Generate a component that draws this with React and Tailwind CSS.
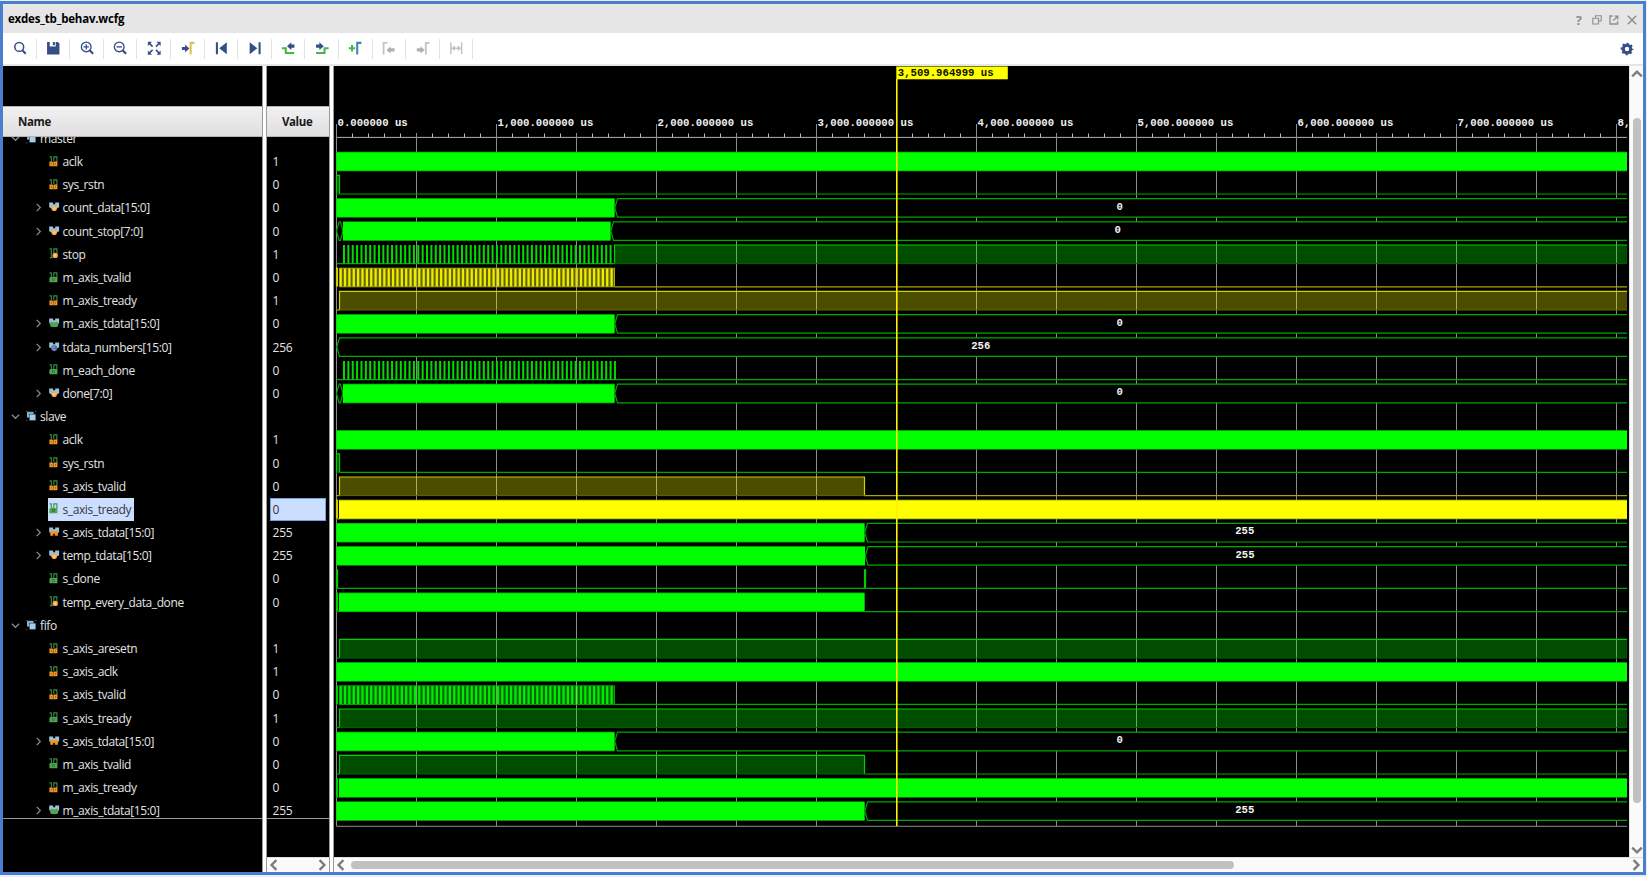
const GREEN = { solid: '#00ff00', line: '#00a800', edge: '#00d000', fill: '#004d00', dim: '#006400' }
const YELLOW = { solid: '#ffff00', line: '#a8a800', edge: '#d0d000', fill: '#4d4d00', dim: '#646400' }

const X0 = 336.5
const X1 = 1627
const M_END = 614.5
const S_END = 864.5

const solid = (a, b) => ({ type: 'solid', a, b })
const low = (a, b) => ({ type: 'low', a, b })
const high = (a, b) => ({ type: 'high', a, b })
const bus = (a, b, label, closed) => ({ type: 'bus', a, b, label, closed })
const pulses = (a, b) => ({ type: 'pulses', a, b })
const dense = (a, b) => ({ type: 'dense', a, b })

const ROWS = [
  { name: 'master', group: true },
  { name: 'aclk', icon: 'in', value: '1', wave: [solid(X0, X1)] },
  { name: 'sys_rstn', icon: 'in', value: '0', wave: [high(X0, 339.5), low(339.5, X1)] },
  { name: 'count_data[15:0]', icon: 'bus-reg', value: '0', wave: [solid(X0, M_END), bus(M_END, X1, '0')] },
  { name: 'count_stop[7:0]', icon: 'bus-reg', value: '0', wave: [bus(X0, 343, '', true), solid(343, 610.5), bus(610.5, X1, '0')] },
  { name: 'stop', icon: 'reg', value: '1', wave: [low(X0, M_END), pulses(343, 613), high(M_END, X1)] },
  { name: 'm_axis_tvalid', icon: 'out', value: '0', color: YELLOW, wave: [high(X0, 337.5), dense(339.5, M_END), low(M_END, X1)] },
  { name: 'm_axis_tready', icon: 'in', value: '1', color: YELLOW, wave: [low(X0, 339.5), high(339.5, X1)] },
  { name: 'm_axis_tdata[15:0]', icon: 'bus-out', value: '0', wave: [solid(X0, M_END), bus(M_END, X1, '0')] },
  { name: 'tdata_numbers[15:0]', icon: 'bus-const', value: '256', wave: [bus(X0, X1, '256')] },
  { name: 'm_each_done', icon: 'out', value: '0', wave: [low(X0, X1), pulses(343, 618)] },
  { name: 'done[7:0]', icon: 'bus-reg', value: '0', wave: [bus(X0, 343, '', true), solid(343, M_END), bus(M_END, X1, '0')] },
  { name: 'slave', group: true },
  { name: 'aclk', icon: 'in', value: '1', wave: [solid(X0, X1)] },
  { name: 'sys_rstn', icon: 'in', value: '0', wave: [high(X0, 339.5), low(339.5, X1)] },
  { name: 's_axis_tvalid', icon: 'in', value: '0', color: YELLOW, wave: [low(X0, 339.5), high(339.5, S_END), low(S_END, X1)] },
  { name: 's_axis_tready', icon: 'out', value: '0', color: YELLOW, selected: true, wave: [high(X0, 337.5), low(337.5, 339), solid(339, X1)] },
  { name: 's_axis_tdata[15:0]', icon: 'bus-in', value: '255', wave: [solid(X0, S_END), bus(S_END, X1, '255')] },
  { name: 'temp_tdata[15:0]', icon: 'bus-reg', value: '255', wave: [solid(X0, 865), bus(865, X1, '255')] },
  { name: 's_done', icon: 'out', value: '0', wave: [high(X0, 337.5), low(337.5, X1), high(864.5, 865.5)] },
  { name: 'temp_every_data_done', icon: 'reg', value: '0', wave: [high(X0, 337.5), low(337.5, 339), solid(339, S_END), low(S_END, X1)] },
  { name: 'fifo', group: true },
  { name: 's_axis_aresetn', icon: 'in', value: '1', wave: [low(X0, 339.5), high(339.5, X1)] },
  { name: 's_axis_aclk', icon: 'in', value: '1', wave: [solid(X0, X1)] },
  { name: 's_axis_tvalid', icon: 'in', value: '0', wave: [high(X0, 337.5), dense(339.5, M_END), low(M_END, X1)] },
  { name: 's_axis_tready', icon: 'out', value: '1', wave: [low(X0, 339.5), high(339.5, X1)] },
  { name: 's_axis_tdata[15:0]', icon: 'bus-in', value: '0', wave: [solid(X0, M_END), bus(M_END, X1, '0')] },
  { name: 'm_axis_tvalid', icon: 'out', value: '0', wave: [low(X0, 339.5), high(339.5, S_END), low(S_END, X1)] },
  { name: 'm_axis_tready', icon: 'in', value: '0', wave: [high(X0, 337.5), low(337.5, 339), solid(339, X1)] },
  { name: 'm_axis_tdata[15:0]', icon: 'bus-out', value: '255', wave: [solid(X0, S_END), bus(S_END, X1, '255')] },
]

const NAVY = '#344f87'

function Chevron({ dir = 'right', size = 9, color = '#8a8a8a', width = 1.4 }) {
  const d = {
    right: 'M3 1 L7 5 L3 9',
    left: 'M7 1 L3 5 L7 9',
    down: 'M1 3 L5 7 L9 3',
    up: 'M1 7 L5 3 L9 7',
  }[dir]
  return (
    <svg width={size} height={size} viewBox="0 0 10 10" className="block shrink-0" fill="none" stroke={color} strokeWidth={width}>
      <path d={d} />
    </svg>
  )
}

// lower half of a scalar signal icon
function Marker({ kind }) {
  if (kind === 'in') {
    return (
      <>
        <path d="M0.4 5.4 h3 l1 1 l1 -1 h3 v4.8 h-8 z" fill="#ef9526" />
        <path d="M4.4 6.2 v4 M2.3 7 v1.8 M6.5 7 v1.8" stroke="#8d5212" strokeWidth="0.7" />
      </>
    )
  }
  return (
    <>
      <path d="M0.4 5.8 l1 -0.8 h6 l1 0.8 v4.4 h-8 z" fill="#4fa551" />
      <rect x="3.3" y="6.6" width="2.2" height="2" fill="none" stroke="#2b7032" strokeWidth="0.7" />
    </>
  )
}

function SignalIcon({ icon }) {
  if (icon.startsWith('bus-')) {
    const kind = icon.slice(4)
    return (
      <svg width="11" height="11" viewBox="0 0 11 11" className="block">
        <path d="M0.2 0.6 h3.9 v1.6 h2.1 v-1.6 h3.9 v4.6 l-2 1 h-5.9 l-2 -1 z" fill="#9cc3dc" />
        {kind === 'reg' && <circle cx="5.2" cy="6.3" r="2.8" fill="#f9a94b" />}
        {kind === 'reg' && <circle cx="5.2" cy="6.3" r="1.2" fill="#fdd08f" />}
        {kind === 'in' && <path d="M1.3 3.8 h2.6 l1.2 1 l1.2 -1 h2.6 v5 h-3 v-2 h-1.6 v2 h-3 z" fill="#ef9526" />}
        {kind === 'out' && <path d="M1.2 4.6 l1.4 -1 l2.5 1 l2.5 -1 l1.6 1 v3.2 l-1 1.2 h-6 l-1 -1.2 z" fill="#4fa551" />}
        {kind === 'const' && (
          <>
            <circle cx="5.2" cy="6.3" r="3" fill="#4d689e" />
            <path d="M6.3 5.2 A1.5 1.5 0 1 0 6.3 7.4" fill="none" stroke="#b8c9e6" strokeWidth="0.8" />
          </>
        )}
      </svg>
    )
  }
  return (
    <svg width="11" height="12" viewBox="0 0 11 12" className="block">
      <path d="M0.6 0.9 h1.7 v4.6 M4.8 5.5 V0.9 h3.1 v5" fill="none" stroke="#3a9048" strokeWidth="1.1" />
      {icon === 'reg'
        ? <><path d="M2.3 5 v4.6 M0.8 9.6 h3" fill="none" stroke="#3a9048" strokeWidth="1.1" /><circle cx="6.2" cy="7.4" r="2.7" fill="#f9a94b" /><circle cx="6.2" cy="7.4" r="1" fill="#fdd9a4" /></>
        : <Marker kind={icon} />}
    </svg>
  )
}

function GroupIcon() {
  return (
    <svg width="11" height="11" viewBox="0 0 11 11" className="block">
      <path d="M0.3 0.5 h1 M9.3 0.5 h1 M0.3 9.8 h1" stroke="#70767c" strokeWidth="1" />
      <rect x="1" y="0.8" width="6.6" height="5.8" fill="#7fb0d0" />
      <rect x="3.4" y="3.2" width="6.4" height="6.2" fill="#a8cde4" stroke="#223f55" strokeWidth="0.5" />
    </svg>
  )
}

function NameRow({ row }) {
  if (row.group) {
    return (
      <div className="flex h-[23.2px] items-center pl-[8px]">
        <Chevron dir="down" />
        <div className="ml-[6px] w-[14px]"><GroupIcon /></div>
        <span className="mt-[1px]">{row.name}</span>
      </div>
    )
  }
  return (
    <div className="flex h-[23.2px] items-center pl-[31px]">
      <div className="w-[14px]">{row.icon.startsWith('bus-') && <Chevron />}</div>
      <div className={`flex h-full items-center pl-[1px] pr-[3px] ${row.selected ? 'bg-[#ccdeff] text-[#33373d]' : ''}`}>
        <div className="w-[13.5px]"><SignalIcon icon={row.icon} /></div>
        <span className="mt-[1px]">{row.name}</span>
      </div>
    </div>
  )
}

function Segment({ seg, y, color }) {
  const { type, a, b } = seg
  const top = y - 9.2
  const bot = y + 9.4
  if (type === 'solid') {
    return (
      <g>
        <rect x={a} y={top - 0.5} width={b - a} height={bot - top + 1} fill={color.line} />
        <rect x={a} y={top + 0.3} width={b - a} height={bot - top - 0.6} fill={color.solid} />
      </g>
    )
  }
  if (type === 'low') return <path d={`M${a} ${bot} H${b}`} stroke={color.line} strokeWidth="1.2" />
  if (type === 'high') {
    return (
      <g>
        <rect x={a} y={top} width={b - a} height={bot - top} fill={color.solid} fillOpacity="0.3" />
        <path d={`M${a} ${bot} V${top} H${b}${b < X1 ? ` V${bot}` : ''}`} fill="none" stroke={color.edge} strokeWidth="1.2" />
        <path d={`M${a} ${bot} H${b}`} stroke={color.dim} strokeWidth="1" />
      </g>
    )
  }
  if (type === 'bus') {
    const d = seg.closed
      ? `M${a} ${y} L${a + 2.6} ${top} H${b - 2.6} L${b} ${y} L${b - 2.6} ${bot} H${a + 2.6} Z`
      : `M${b} ${top} H${a + 3} L${a + 0.3} ${y} L${a + 3} ${bot} H${b}`
    return (
      <g>
        <path d={d} fill="#000" stroke={color.line} strokeWidth="1.2" />
        {seg.label && <text x={(a + b) / 2 - 1} y={y + 1.8} textAnchor="middle">{seg.label}</text>}
      </g>
    )
  }
  const step = 4.37
  const count = Math.round((b - a) / step)
  const bars = Array.from({ length: count }, (_, i) => a + i * step)
  if (type === 'pulses') {
    return <g>{bars.map(x => <rect key={x} x={x} y={top} width="2" height={bot - top} fill="#00dc00" />)}</g>
  }
  return (
    <g>
      <rect x={a} y={top} width={b - a} height={bot - top} fill={color.dim} />
      {bars.map(x => <rect key={x} x={x} y={top} width="2.3" height={bot - top} fill={color.solid} fillOpacity="0.88" />)}
      <path d={`M${a} ${bot} V${top} H${b} V${bot} H${a}`} fill="none" stroke={color.line} strokeWidth="1" />
      {[416.5, 496.5, 576.5].map(x => <path key={x} d={`M${x} ${top} V${bot}`} stroke="#c8c8a0" strokeOpacity="0.6" />)}
    </g>
  )
}

function WavePanel() {
  const minor = Array.from({ length: 81 }, (_, i) => i)
  const halves = minor.filter(i => i % 5 === 0)
  return (
    <svg width="1295" height="791" viewBox="334 66 1295 791" className="block bg-black"
      fontFamily="'Liberation Mono', monospace" fontSize="10.65" fontWeight="700" fill="#f2f2f2">
      {/* time ruler */}
      <path d={`M${X0} 137.4 H${X1}`} stroke="#b0b0b0" strokeWidth="1" />
      {minor.map(i => <path key={i} d={`M${X0 + i * 16} 133.5 V137`} stroke="#c0c0c0" strokeWidth="1" />)}
      {halves.map(i => (
        <path key={i} d={`M${X0 + i * 16} ${i % 10 === 0 ? 124 : 133} V826`} stroke="#8c8c8c" strokeWidth="1" />
      ))}
      {halves.filter(i => i % 10 === 0).map(i => (
        <text key={i} x={X0 + i * 16 + 1} y="125.6" xmlSpace="preserve">
          {i === 0 ? '0.000000 us' : i === 80 ? '8,' : `${i / 10},000.000000 us`}
        </text>
      ))}

      {ROWS.map((row, i) => !row.group && (
        <g key={i}>
          {row.wave.map((seg, k) => <Segment key={k} seg={seg} y={138.2 + i * 23.2} color={row.color ?? GREEN} />)}
        </g>
      ))}
      <path d={`M${X0} 826.3 H${X1}`} stroke="#8c8c8c" strokeWidth="1" />

      {/* cursor */}
      <rect x="896" y="79" width="1.6" height="747" fill="#fff000" />
      <rect x="896.3" y="66.5" width="111.5" height="12.8" fill="#ffff00" />
      <text x="897.8" y="76.3" fill="#111100">3,509.964999 us</text>
    </svg>
  )
}

const TOOLS = [
  <><circle cx="7" cy="6.7" r="4.3" fill="none" stroke={NAVY} strokeWidth="1.5" /><path d="M10 10 L13.3 13.3" stroke={NAVY} strokeWidth="2" /></>,
  <path d="M2 2 h2.6 v4.2 h5.8 v-4.2 h2.1 l1.5 1.5 v10.5 h-12 z M7.6 2 h2 v3 h-2 z" fill={NAVY} />,
  <><circle cx="7" cy="6.7" r="4.7" fill="none" stroke={NAVY} strokeWidth="1.3" /><path d="M4.4 6.7 h5.2 M7 4.1 v5.2" stroke={NAVY} strokeWidth="1.2" /><path d="M10.3 10 L13.7 13.4" stroke={NAVY} strokeWidth="2" /></>,
  <><circle cx="7" cy="6.7" r="4.7" fill="none" stroke={NAVY} strokeWidth="1.3" /><path d="M4.4 6.7 h5.2" stroke={NAVY} strokeWidth="1.3" /><path d="M10.3 10 L13.7 13.4" stroke={NAVY} strokeWidth="2" /></>,
  <><path d="M1.8 1.8 h4 l-4 4 z M14.2 1.8 v4 l-4 -4 z M1.8 14.2 v-4 l4 4 z M14.2 14.2 h-4 l4 -4 z" fill={NAVY} /><path d="M3 3 L6.4 6.4 M13 3 L9.6 6.4 M3 13 L6.4 9.6 M13 13 L9.6 9.6" stroke={NAVY} strokeWidth="1.5" /></>,
  <><path d="M1.8 6.8 h3.2 v-2.4 l4 3.8 l-4 3.8 v-2.4 h-3.2 z" fill={NAVY} /><path d="M10.3 14 V2.8 H14" fill="none" stroke="#dfbf55" strokeWidth="2" /></>,
  <path d="M2.8 2.2 h2 v11.6 h-2 z M13.4 2.2 v11.6 L6 8 z" fill={NAVY} />,
  <path d="M11.2 2.2 h2 v11.6 h-2 z M2.6 2.2 v11.6 L10 8 z" fill={NAVY} />,
  <><path d="M1.8 8 H5.6 V12.6 H13.8" fill="none" stroke="#45b649" strokeWidth="2" /><path d="M6.8 6 l4.2 -3.8 v2.2 h3 v3.2 h-3 v2.2 z" fill={NAVY} /></>,
  <><path d="M2 12.6 H10.2 V8 H14.2" fill="none" stroke="#45b649" strokeWidth="2" /><path d="M9.4 6 l-4.2 -3.8 v2.2 h-3.2 v3.2 h3.2 v2.2 z" fill={NAVY} /></>,
  <><path d="M1.8 8 H8 M4.9 4.9 V11.1" stroke="#45b649" strokeWidth="2" /><path d="M9.9 14 V2.8 H14" fill="none" stroke="#3f86b0" strokeWidth="2" /></>,
  <><path d="M2.5 14 V2.8 H6.2" fill="none" stroke="#c4c4c4" strokeWidth="1.8" /><path d="M5.4 9.6 l3.8 -3.6 v2 h4 v3.2 h-4 v2 z" fill="#b0b0b0" /></>,
  <><path d="M10.5 14 V2.8 H14.2" fill="none" stroke="#c4c4c4" strokeWidth="1.8" /><path d="M9.2 9.6 l-3.8 -3.6 v2 h-3.6 v3.2 h3.6 v2 z" fill="#b0b0b0" /></>,
  <path d="M2.8 2.5 V13.5 M13.2 2.5 V13.5 M4.5 8 H11.5 M6.4 6 L4.4 8 L6.4 10 M9.6 6 L11.6 8 L9.6 10" fill="none" stroke="#c0c0c0" strokeWidth="1.4" />,
]

function Toolbar() {
  return (
    <div className="flex h-[33px] shrink-0 items-center border-b-2 border-[#e6e6e6] bg-white">
      {TOOLS.map((glyph, i) => (
        <div key={i} className="flex h-[20px] w-[33.6px] items-center justify-center border-r border-[#e2e2e2] pl-[1px]">
          <svg width="16.5" height="16.5" viewBox="0 0 16 16">{glyph}</svg>
        </div>
      ))}
      <svg width="14" height="14" viewBox="0 0 14 14" className="mr-[9.5px] ml-auto" fill="none" stroke={NAVY}>
        <circle cx="7" cy="7" r="3.7" strokeWidth="3" />
        <circle cx="7" cy="7" r="5.4" strokeWidth="1.9" strokeDasharray="2.12 2.12" strokeDashoffset="1.06" />
      </svg>
    </div>
  )
}

function TitleBar() {
  return (
    <div className="flex h-[29px] shrink-0 items-center bg-[#e6e6e6] pr-[6px] pl-[5px]">
      <span className="mt-[1px] text-[11.5px] font-bold tracking-[-0.2px] text-black">exdes_tb_behav.wcfg</span>
      <div className="mt-[3px] ml-auto flex items-center gap-[7.7px] text-[#8e8e8e]">
        <span className="w-[10px] text-center text-[13px] leading-[10px] font-bold">?</span>
        <svg width="10" height="10" viewBox="0 0 10 10" fill="none" stroke="currentColor" strokeWidth="1.1">
          <path d="M3.5 3 V0.8 H9.2 V6 H6.6 M0.8 3.2 H6.5 V9 H0.8 Z" />
        </svg>
        <svg width="10" height="10" viewBox="0 0 10 10" fill="none" stroke="currentColor" strokeWidth="1.3">
          <path d="M3.6 1 H1 V9 H8.6 V6 M4.2 5.6 L8 2 M5.6 1.2 H8.8 V4.4" />
        </svg>
        <svg width="10" height="10" viewBox="0 0 10 10" fill="none" stroke="currentColor" strokeWidth="1.5">
          <path d="M0.8 0.8 L9.2 9.2 M9.2 0.8 L0.8 9.2" />
        </svg>
      </div>
    </div>
  )
}

function ColumnHeader({ children, className }) {
  return (
    <div className={`flex h-[31px] shrink-0 items-center border-y border-[#b4b4b4] bg-linear-to-b from-[#f1f1f2] to-[#dfdfe1] pt-[1px] text-[11.5px] font-bold tracking-[-0.4px] text-[#1a1a1a] ${className}`}>
      {children}
    </div>
  )
}

export default function App() {
  return (
    <div className="h-[877px] w-[1647px] overflow-hidden bg-[#e9eef6] pt-px font-['Open_Sans','Noto_Sans',sans-serif]">
      <div className="flex h-[874px] w-[1646px] flex-col border-[3px] border-[#4a7fd0] bg-white">
        <TitleBar />
        <Toolbar />
        <div className="flex min-h-0 flex-1">
          {/* signal names */}
          <div className="flex w-[260px] shrink-0 flex-col border-r border-[#9a9a9a] bg-black">
            <div className="h-[40px] shrink-0" />
            <ColumnHeader className="pl-[15px]">Name</ColumnHeader>
            <div className="h-[682px] overflow-hidden border-b border-[#9a9a9a] text-[12px] tracking-[-0.4px] text-[#e4e4e4]">
              <div className="-mt-[10.2px]">
                {ROWS.map((row, i) => <NameRow key={i} row={row} />)}
              </div>
            </div>
          </div>

          {/* values */}
          <div className="ml-[3px] flex w-[64px] shrink-0 flex-col border-x border-[#9a9a9a] bg-black">
            <div className="h-[40px] shrink-0" />
            <ColumnHeader className="pl-[15px]">Value</ColumnHeader>
            <div className="h-[682px] shrink-0 overflow-hidden border-b border-[#9a9a9a] text-[12px] tracking-[-0.2px] text-[#e4e4e4]">
              <div className="-mt-[10.2px]">
                {ROWS.map((row, i) => (
                  <div key={i} className="h-[23.2px] px-[3px]">
                    <div className={`flex h-full items-center border pt-[1px] pl-[1.5px] ${row.selected ? 'border-[#6ea6dc] bg-[#ccdeff] text-[#33373d]' : 'border-transparent'}`}>
                      {row.value}
                    </div>
                  </div>
                ))}
              </div>
            </div>
            <div className="min-h-0 flex-1" />
            <div className="flex h-[15px] shrink-0 items-center justify-between border-t border-[#e0e0e0] bg-[#fafafa] px-[1px]">
              <Chevron dir="left" size={12} color="#7d7d7d" width={2} />
              <Chevron dir="right" size={12} color="#7d7d7d" width={2} />
            </div>
          </div>

          {/* waveforms */}
          <div className="ml-[3px] flex min-w-0 flex-1 flex-col border-l border-[#9a9a9a] bg-[#fafafa]">
            <div className="flex">
              <WavePanel />
              <div className="flex flex-1 flex-col items-center border-l border-[#e0e0e0] pt-[2px] pb-px">
                <Chevron dir="up" size={12} color="#7d7d7d" width={2} />
                <div className="mt-[38px] h-[685px] w-[8px] rounded-full bg-[#c1c1c1]" />
                <div className="mt-auto"><Chevron dir="down" size={12} color="#7d7d7d" width={2} /></div>
              </div>
            </div>
            <div className="flex flex-1 items-center border-t border-[#e0e0e0] px-[1px]">
              <Chevron dir="left" size={12} color="#7d7d7d" width={2} />
              <div className="ml-[4px] h-[8px] w-[883px] rounded-full bg-[#c1c1c1]" />
              <div className="ml-auto"><Chevron dir="right" size={12} color="#7d7d7d" width={2} /></div>
            </div>
          </div>
        </div>
      </div>
    </div>
  )
}
